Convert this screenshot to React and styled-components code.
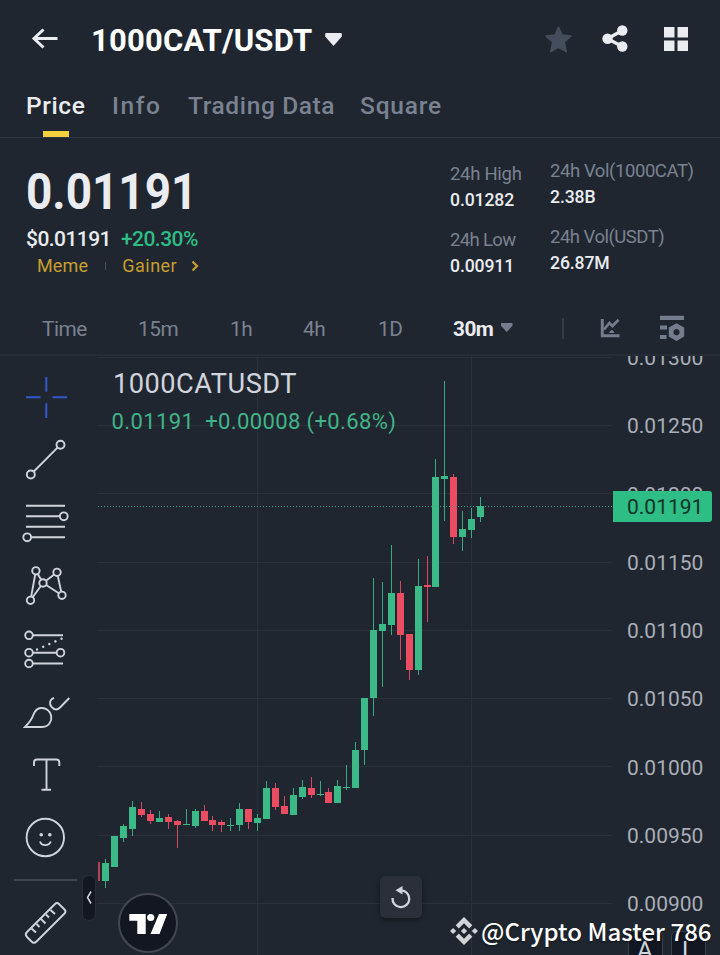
import React from 'react';
import styled, { createGlobalStyle } from 'styled-components';

const C = {
  bg: '#1f262f',
  line: '#2f363f',
  text: '#eaecef',
  muted: '#7a8291',
  glyph: '#747d8d',
  gold: '#c99e2f',
  green: '#2ebd85',
  candleUp: '#3bb987',
  candleDown: '#ea4d62',
  tool: '#d1d4dc',
  panel: '#131722',
};

const Global = createGlobalStyle`
  * { box-sizing: border-box; }
  body { margin: 0; background: ${C.bg}; }
`;

const Screen = styled.main`
  position: relative;
  width: 720px;
  height: 955px;
  overflow: hidden;
  display: flex;
  flex-direction: column;
  background: ${C.bg};
  color: ${C.text};
  font-family: Roboto, sans-serif;
  white-space: pre;
`;

const Icon = styled.svg`
  display: block;
  flex: none;
  overflow: visible;
`;

/* Header */
const Header = styled.header`
  height: 80px;
  display: flex;
  align-items: center;
  padding: 0 32px 0 32px;
`;
const Title = styled.h1`
  margin: 2px 0 0 33px;
  font-size: 31px;
  line-height: 40px;
  font-weight: 700;
  letter-spacing: 0.2px;
  color: #fff;
`;
const Caret = styled(Icon)`
  margin-left: 13px;
  margin-right: auto;
`;
const Actions = styled.div`
  display: flex;
  align-items: center;
  gap: 30px;
  padding-bottom: 2px;
`;

/* Tabs */
const Tabs = styled.nav`
  height: 58px;
  flex: none;
  display: grid;
  grid-template-columns: 86px 76px 172px 1fr;
  padding-left: 26px;
  border-bottom: 1px solid ${C.line};
`;
const Tab = styled.div`
  display: flex;
  flex-direction: column;
  justify-content: space-between;
  font-size: 24.5px;
  line-height: 51px;
  font-weight: 500;
  letter-spacing: ${(p) => p.$track}px;
  color: ${(p) => (p.$active ? C.text : C.muted)};
`;
const Marker = styled.span`
  width: 26px;
  height: 6px;
  margin-left: 17px;
  background: #f3d03e;
`;

/* Price summary */
const Summary = styled.section`
  height: 166px;
  flex: none;
  display: grid;
  grid-template-columns: 424px 100px 1fr;
  padding-left: 26px;
`;
const PriceBlock = styled.div`
  padding-top: 28px;
`;
const BigPrice = styled.div`
  font-size: 50px;
  line-height: 53px;
  font-weight: 700;
  transform: scaleX(0.918);
  transform-origin: 0 50%;
`;
const SubPrice = styled.div`
  display: flex;
  gap: 10px;
  margin-top: 8px;
  font-size: 21px;
  line-height: 24px;
  font-weight: 500;
  letter-spacing: -0.55px;
`;
const Change = styled.span`
  color: ${C.green};
`;
const Tags = styled.div`
  display: flex;
  align-items: center;
  margin: 5px 0 0 11px;
  font-size: 18px;
  line-height: 20px;
  color: ${C.gold};
`;
const Tag = styled.span`
  letter-spacing: ${(p) => p.$track}px;
`;
const TagRule = styled.span`
  width: 1px;
  height: 8px;
  margin: 0 16.5px;
  background: #434c58;
`;
const TagArrow = styled(Icon)`
  margin-left: 14px;
`;
const Stats = styled.dl`
  margin: 0;
  padding-top: ${(p) => p.$top}px;
  display: flex;
  flex-direction: column;
  gap: 14px;
`;
const Label = styled.dt`
  font-size: 18.5px;
  line-height: 26px;
  letter-spacing: ${(p) => p.$track}px;
  color: ${C.muted};
`;
const Value = styled.dd`
  margin: 0;
  font-size: 17.6px;
  line-height: 26px;
  font-weight: 500;
  letter-spacing: -0.12px;
`;

/* Interval bar */
const Intervals = styled.nav`
  height: 50px;
  flex: none;
  display: grid;
  grid-template-columns: 96px 92px 73px 75px 75px 109px 38px 59px 1fr;
  align-items: center;
  padding-left: 42px;
  font-size: 20.8px;
  color: ${C.muted};
`;
const Interval = styled.span`
  display: flex;
  align-items: center;
  gap: 8px;
  letter-spacing: -0.5px;
  font-weight: ${(p) => (p.$active ? 700 : 400)};
  color: ${(p) => (p.$active ? C.text : C.muted)};
`;
const BarRule = styled.span`
  width: 2px;
  height: 21px;
  margin-top: -2px;
  background: #343c47;
`;
const BarIcon = styled(Icon)`
  margin-top: -2px;
`;

/* Chart */
const Chart = styled.section`
  position: relative;
  height: 601px;
  flex: none;
  overflow: hidden;
  display: grid;
  grid-template-columns: 97px 516px 107px;
  border-top: 2px solid #272d37;
`;
const Tools = styled.aside`
  height: 599px;
  padding-top: 10px;
  display: flex;
  flex-direction: column;
`;
const ToolIcon = styled(Icon)`
  fill: none;
  stroke: ${(p) => (p.$active ? '#3358cc' : C.tool)};
  stroke-width: ${(p) => (p.$active ? 2 : 1.9)};
`;
const ToolRule = styled.hr`
  width: 63px;
  height: 2px;
  margin: 9px 0 6px 14px;
  border: 0;
  flex: none;
  background: #404550;
`;
const Axis = styled.div`
  height: 599px;
  overflow: hidden;
  padding-left: 14px;
`;
const AxisLabel = styled.div`
  height: 68.25px;
  line-height: 68.25px;
  font-size: 21px;
  color: #a9aeb8;
  &:first-child { margin-top: -32px; }
`;
const Legend = styled.div`
  position: absolute;
  left: 113px;
  top: 11px;
`;
const LegendName = styled.div`
  font-size: 27.2px;
  line-height: 34px;
  letter-spacing: 0.5px;
  color: #d1d4dc;
`;
const LegendValues = styled.div`
  display: flex;
  gap: 11px;
  margin-left: -1.5px;
  font-size: 22px;
  line-height: 42px;
  letter-spacing: 0.38px;
  color: #41b488;
`;
const PriceTag = styled.div`
  position: absolute;
  left: 613px;
  top: 135px;
  width: 99px;
  height: 31px;
  padding-left: 14px;
  border-radius: 0 3px 3px 0;
  background: ${C.green};
  color: #0d3326;
  font-size: 21px;
  line-height: 32px;
`;
const Collapse = styled.button`
  position: absolute;
  left: 82px;
  top: 519px;
  width: 14px;
  height: 46px;
  padding: 0;
  border: 1px solid #292d37;
  border-radius: 7px;
  background: ${C.panel};
`;
const Badge = styled.div`
  position: absolute;
  left: 118px;
  top: 537px;
  width: 60px;
  height: 60px;
  border: 2px solid #444751;
  border-radius: 50%;
  background: ${C.panel};
`;
const Reset = styled.button`
  position: absolute;
  left: 380px;
  top: 520px;
  width: 42px;
  height: 42px;
  padding: 0;
  border: 0;
  border-radius: 5px;
  background: #2b2f3a;
  box-shadow: 0 2px 5px rgba(0, 0, 0, 0.4);
`;
const ScaleButtons = styled.div`
  position: absolute;
  left: 628px;
  top: 575px;
  display: flex;
  gap: 8px;
`;
const ScaleButton = styled.button`
  width: 35px;
  height: 35px;
  padding: 1px 0 0 ${(p) => p.$inset}px;
  text-align: left;
  border: 1px solid #3a3e4a;
  border-radius: 5px;
  background: ${C.panel};
  color: #d1d4dc;
  font: 400 24px/34px Roboto, sans-serif;
`;
const Watermark = styled.div`
  position: absolute;
  left: 450px;
  top: 913px;
  height: 36px;
  display: flex;
  align-items: center;
  gap: 3px;
  color: #fff;
  font: 500 24px/36px 'Noto Sans CJK SC', sans-serif;
  letter-spacing: 0.05px;
  text-shadow: 0 1px 2px rgba(0, 0, 0, 0.5);
`;

/* [wick x, high, body top, body bottom, low, rising] */
const candles = [
  [105, 859, 863, 881, 888, 1], [114, 836, 836, 867, 867, 1], [123, 824, 826, 838, 842, 1],
  [132, 801, 807, 829, 836, 1], [141, 802, 809, 815, 817, 0], [150, 810, 814, 821, 824, 0],
  [159, 811, 818, 822, 822, 1], [168, 814, 817, 822, 829, 0], [177, 820, 821, 825, 848, 0],
  [186, 809, 824, 825, 825, 1], [195, 809, 811, 826, 828, 1], [204, 805, 811, 821, 821, 0],
  [212, 816, 820, 825, 831, 0], [221, 820, 822, 825, 832, 0], [230, 818, 825, 826, 831, 1],
  [239, 803, 809, 825, 831, 1], [248, 809, 809, 822, 829, 0], [257, 814, 818, 823, 831, 1],
  [266, 781, 788, 819, 819, 1], [275, 783, 788, 807, 810, 0], [284, 796, 806, 814, 814, 0],
  [293, 788, 795, 815, 815, 1], [302, 780, 787, 797, 799, 1], [311, 777, 788, 795, 798, 0],
  [320, 781, 794, 795, 796, 1], [328, 788, 792, 803, 803, 0], [337, 780, 786, 803, 803, 1],
  [346, 765, 787, 788, 790, 1], [355, 742, 750, 788, 788, 1], [364, 698, 698, 750, 765, 1],
  [373, 578, 630, 698, 716, 1], [382, 582, 624, 631, 687, 1], [391, 545, 593, 625, 635, 1],
  [400, 581, 593, 635, 660, 0], [409, 634, 634, 670, 680, 0], [418, 559, 586, 670, 675, 1],
  [427, 556, 585, 587, 622, 0], [435, 459, 477, 587, 587, 1], [444, 381, 476, 479, 521, 1],
  [453, 474, 477, 537, 544, 0], [462, 511, 529, 537, 551, 1], [471, 508, 519, 530, 538, 1],
  [480, 497, 506, 517, 522, 1],
];
const gridRows = [357, 425, 493, 562, 630, 698, 766, 835, 903];
const prices = ['0.01300', '0.01250', '0.01200', '0.01150', '0.01100', '0.01050', '0.01000', '0.00950', '0.00900'];

const Plot = () => (
  <Icon width="516" height="599" viewBox="97 356 516 599" shapeRendering="crispEdges">
    {gridRows.map((y) => <rect key={y} x="97" y={y} width="515" height="1" fill="#2a313a" />)}
    {[257, 471].map((x) => <rect key={x} x={x} y="356" width="1" height="599" fill="#2a313a" />)}
    <rect x="98" y="862" width="2" height="19" fill={C.candleDown} opacity="0.75" />
    {candles.map(([x, high, top, bottom, low, up]) => (
      <g key={x} fill={up ? C.candleUp : C.candleDown}>
        <rect x={x} y={high} width="1" height={low - high} opacity="0.9" />
        <rect x={x - 3} y={top} width="7" height={bottom - top} />
      </g>
    ))}
    <path d="M98 506.5H613" stroke="#41a181" strokeDasharray="1 2" />
  </Icon>
);

const Rings = ({ at, r = 4 }) => at.map(([x, y]) => <circle key={`${x}-${y}`} cx={x} cy={y} r={r} fill={C.bg} />);

const tools = [
  <path d="M26 397.3h14.5M52.5 397.3H67M46.3 377v14.7M46.3 403.3V418" />,
  <><path d="M30.8 474.5 60.5 444.7" /><Rings at={[[60.5, 444.7], [30.8, 474.5]]} /></>,
  <><path d="M26 505.7h39M26 516.3h36M26 526.7h39M30 537.3h35" /><Rings r={3.9} at={[[63.8, 516.3], [27.2, 537.3]]} /></>,
  <><path d="M30.500 600.3 35.900 570.800 43 583 57 572.300 62 595.300 43 583Z" /><Rings r={3.700} at={[[35.900, 570.800], [57, 572.300], [43, 583], [30.500, 600.300], [62, 595.300]]} /></>,
  <>
    <path d="M29 635.3h34M29 652.7h30M29 663.5h34" />
    <path d="M37 649.5 62 638.5" strokeDasharray="0.1 6.6" strokeLinecap="round" strokeWidth="2.4" />
    <Rings r={3.8} at={[[29, 635.3], [29, 652.7], [60.5, 652.7], [29, 663.5]]} />
  </>,
  <>
    <path d="M25 727H42.5C49 726.7 52 721 51.2 716 50.2 710.500 45.5 707.600 41 708 37 708.300 34.800 711 33.500 714.500 32 719 29 723 25 727Z" />
    <path d="M54 697.8C49.5 699.5 49 704 51.5 706.8 54 709.8 57 710.5 60 707.5L69.3 698" />
  </>,
  <path d="M34 766v-3.5q0-3 3-3h19.3q3 0 3 3v3.5M46.5 759.5V790M41.5 789.7H51" />,
  <>
    <circle cx="45.3" cy="837.5" r="18.7" />
    <g fill={C.tool} stroke="none"><circle cx="41.2" cy="834.8" r="1.8" /><circle cx="49.8" cy="834.8" r="1.8" /></g>
    <path d="M40 841.5c1.5 4.8 9 4.8 10.8 0" />
  </>,
];

export default function App() {
  return (
    <>
      <Global />
      <Screen>
        <Header>
          <Icon width="26" height="22" viewBox="0 0 26 22" fill="none" stroke={C.text} strokeWidth="3">
            <path d="M25.500 9.500H2.500M11.500 0.500 2 9.500 11.500 18.500" />
          </Icon>
          <Title>1000CAT/USDT</Title>
          <Caret width="17" height="14" viewBox="0 0 17 14" fill={C.text}>
            <path d="M1 0h15q.8 0 .8 1v2.6L8.5 13 .2 3.6V1Q.2 0 1 0Z" />
          </Caret>
          <Actions>
            <Icon width="27" height="27" viewBox="0 0 27 27" fill="#444d5b" stroke="#444d5b" strokeWidth="1.6" strokeLinejoin="round">
              <path d="M13.5 1.2 17 9.1 25.9 10.1 19.2 16 21.2 25.6 13.5 21.2 5.8 25.6 7.8 16 1.1 10.1 10 9.1Z" />
            </Icon>
            <Icon width="27" height="28" viewBox="0 0 27 28" fill={C.text}>
              <path d="M20.3 5.500 5.500 13.800 20.300 21.500" fill="none" stroke={C.text} strokeWidth="3.4" />
              <circle cx="5.500" cy="13.800" r="5.200" /><circle cx="20.300" cy="5.500" r="5.200" /><circle cx="20.300" cy="21.500" r="5.200" />
            </Icon>
            <Icon width="29" height="24" viewBox="-5 0 29 24" fill={C.text}>
              <path d="M0 0h10.5v10.5H0ZM13.5 0H24v10.5H13.5ZM0 13.5h10.5V24H0ZM13.5 13.5H24V24H13.5Z" />
            </Icon>
          </Actions>
        </Header>

        <Tabs>
          <Tab $active $track={0.6}>Price<Marker /></Tab>
          <Tab $track={1.6}>Info</Tab>
          <Tab $track={0.62}>Trading Data</Tab>
          <Tab $track={0.8}>Square</Tab>
        </Tabs>

        <Summary>
          <PriceBlock>
            <BigPrice>0.01191</BigPrice>
            <SubPrice><span>$0.01191</span><Change>+20.30%</Change></SubPrice>
            <Tags>
              <Tag $track={0.15}>Meme</Tag>
              <TagRule />
              <Tag $track={0.5}>Gainer</Tag>
              <TagArrow width="8" height="10" viewBox="0 0 8 10" fill="none" stroke={C.gold} strokeWidth="2.200">
                <path d="M1.5 0.500 6 5 1.5 9.500" />
              </TagArrow>
            </Tags>
          </PriceBlock>
          <Stats $top={23}>
            <div><Label $track={-0.28}>24h High</Label><Value>0.01282</Value></div>
            <div><Label $track={-0.65}>24h Low</Label><Value>0.00911</Value></div>
          </Stats>
          <Stats $top={20}>
            <div><Label $track={-0.42}>24h Vol(1000CAT)</Label><Value>2.38B</Value></div>
            <div><Label $track={-0.5}>24h Vol(USDT)</Label><Value>26.87M</Value></div>
          </Stats>
        </Summary>

        <Intervals>
          <Interval>Time</Interval>
          <Interval>15m</Interval>
          <Interval>1h</Interval>
          <Interval>4h</Interval>
          <Interval>1D</Interval>
          <Interval $active>
            30m
            <BarIcon width="12" height="10" viewBox="0 0 12 10" fill={C.glyph}><path d="M0 0h11.500v2.800L5.750 9 0 2.800Z" /></BarIcon>
          </Interval>
          <BarRule />
          <BarIcon width="20" height="20" viewBox="600 317 20 20" fill="none" stroke={C.glyph}>
            <path d="M602.300 318v16.800H619.500" strokeWidth="3" />
            <path d="M604 328.500 609.500 322 612.500 325 618.500 318.800" strokeWidth="2.700" />
            <path d="M609.500 331.500 611.800 329 614 331.500Z" strokeWidth="1" fill={C.glyph} />
          </BarIcon>
          <BarIcon width="26" height="26" viewBox="659 315 26 26" fill={C.glyph}>
            <path d="M660 315.700h24v4.300h-24ZM660 325.500h7v4h-7ZM660 335h6.500v4H660Z" />
            <path fillRule="evenodd" d="M676.500 323.200 684.200 327.600V336.500L676.500 341 668.800 336.500V327.600ZM676.500 329a3.100 3.100 0 1 0 .01 0Z" />
          </BarIcon>
        </Intervals>

        <Chart>
          <Tools>
            {tools.map((shape, i) => (
              <ToolIcon key={i} $active={i === 0} width="92" height="63" viewBox={`0 ${366 + 63 * i} 92 63`}>{shape}</ToolIcon>
            ))}
            <ToolRule />
            <ToolIcon width="92" height="68" viewBox="0 887 92 68">
              <path d="M27 932 55 904Q57 902 59 904L64.5 909.5Q66.5 911.5 64.5 913.5L36.5 941.5Q34 944 31.5 941.5L27 937Q24.5 934.5 27 932Z" />
              <path d="M31.5 928.5 36 932.5M36.5 924 39.5 927M41 919 45.5 923.5M46 914.5 49 917.5M50.5 910 55 914" />
            </ToolIcon>
          </Tools>
          <Plot />
          <Axis>{prices.map((p) => <AxisLabel key={p}>{p}</AxisLabel>)}</Axis>

          <Legend>
            <LegendName>1000CATUSDT</LegendName>
            <LegendValues><span>0.01191</span><span>+0.00008 (+0.68%)</span></LegendValues>
          </Legend>
          <PriceTag>0.01191</PriceTag>
          <Collapse aria-label="Collapse toolbar">
            <Icon width="12" height="44" viewBox="0 0 12 44" fill="none" stroke={C.tool} strokeWidth="1.5"><path d="M8 15.500 4.500 21.500 8 27.500" /></Icon>
          </Collapse>
          <Badge>
            <Icon width="56" height="56" viewBox="120 895 56 56" fill="#fff">
              <path d="M129.3 914H145.7V934H137.3V920.7H129.3ZM159 914H167.2L159.5 934H150.5Z" />
              <circle cx="150.7" cy="917.5" r="3.6" />
            </Icon>
          </Badge>
          <Reset aria-label="Reset chart">
            <Icon width="42" height="42" viewBox="380 876 42 42" fill="none" stroke={C.tool} strokeWidth="2.3">
              <path d="M392.5 898A8.4 8.400 0 1 0 401 890.300" />
              <path d="M395.5 890.3 402.5 886V894.6Z" fill={C.tool} stroke="none" />
            </Icon>
          </Reset>
          <ScaleButtons>
            <ScaleButton $inset={8}>A</ScaleButton>
            <ScaleButton $inset={10}>L</ScaleButton>
          </ScaleButtons>
        </Chart>

        <Watermark>
          <Icon width="28" height="28" viewBox="0 0 28 28" fill="#d2d3d5">
            <path d="M14 0 22.3 8.3 19.2 11.4 14 6.2 8.8 11.4 5.7 8.3ZM14 28 22.3 19.7 19.2 16.6 14 21.8 8.8 16.6 5.7 19.7ZM3.1 10.9 6.2 14 3.1 17.1 0 14ZM24.9 10.9 28 14 24.9 17.1 21.8 14ZM14 10.9 17.1 14 14 17.1 10.9 14Z" />
          </Icon>
          <span>@Crypto Master 786</span>
        </Watermark>
      </Screen>
    </>
  );
}
